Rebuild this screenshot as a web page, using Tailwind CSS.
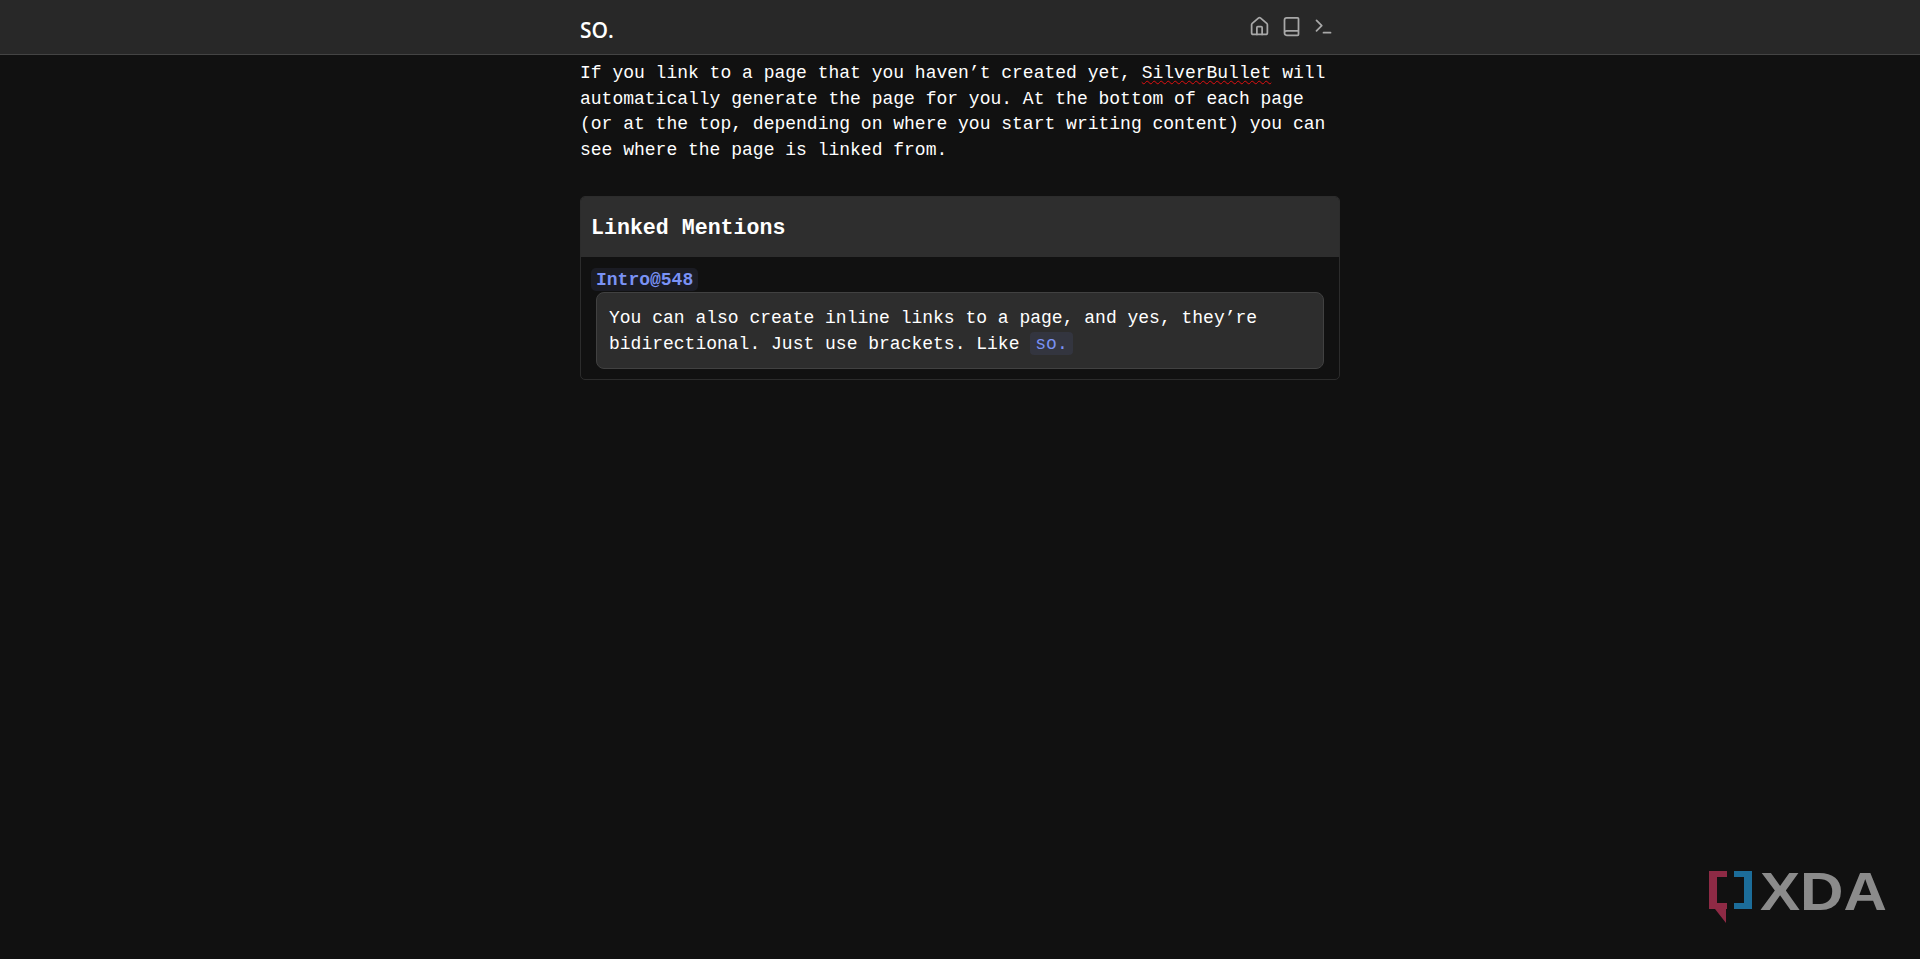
<!doctype html>
<html lang="en">
<head>
<meta charset="utf-8">
<title>so.</title>
<script src="https://cdn.jsdelivr.net/npm/@tailwindcss/browser@4"></script>
</head>
<body class="relative h-[959px] overflow-hidden bg-[#111111] text-white font-['Liberation_Mono',monospace] text-[18px] leading-[25.6px]">
<header class="h-[55px] border-b border-[#444444] bg-[#282828]">
  <div class="mx-auto flex h-full w-[760px] items-start justify-between">
    <h1 class="mt-[17px] font-['Open_Sans',sans-serif] text-[21px] leading-[27px] font-semibold">SO.</h1>
    <nav class="mt-[16px] mr-[6px] flex items-center gap-[11px] text-[#a8a8a8]">
      <svg class="h-[21px] w-[21px]" viewBox="0 0 24 24" fill="none" stroke="currentColor" stroke-width="2" stroke-linecap="round" stroke-linejoin="round"><path d="M15 21v-8a1 1 0 0 0-1-1h-4a1 1 0 0 0-1 1v8"/><path d="M3 10a2 2 0 0 1 .709-1.528l7-5.999a2 2 0 0 1 2.582 0l7 5.999A2 2 0 0 1 21 10v9a2 2 0 0 1-2 2H5a2 2 0 0 1-2-2z"/></svg>
      <svg class="h-[21px] w-[21px]" viewBox="0 0 24 24" fill="none" stroke="currentColor" stroke-width="2" stroke-linecap="round" stroke-linejoin="round"><path d="M4 19.5v-15A2.5 2.5 0 0 1 6.5 2H19a1 1 0 0 1 1 1v18a1 1 0 0 1-1 1H6.5a1 1 0 0 1 0-5H20"/></svg>
      <svg class="h-[21px] w-[21px]" viewBox="0 0 24 24" fill="none" stroke="currentColor" stroke-width="2" stroke-linecap="round" stroke-linejoin="round"><polyline points="4 17 10 11 4 5"/><line x1="12" y1="19" x2="20" y2="19"/></svg>
    </nav>
  </div>
</header>
<main class="mx-auto w-[760px]">
  <p class="mt-[6px] whitespace-pre-line">If you link to a page that you haven’t created yet, <span class="underline decoration-wavy decoration-[#e01010] decoration-1 underline-offset-2">SilverBullet</span> will
automatically generate the page for you. At the bottom of each page
(or at the top, depending on where you start writing content) you can
see where the page is linked from.</p>
  <section class="mt-[32.6px] h-[184px] rounded-[5px] border border-[#2c2c2c]">
    <h2 class="flex h-[60px] items-center rounded-t-[4px] bg-[#2e2e2e] pt-[4px] pl-[10px] text-[21.6px] font-bold">Linked Mentions</h2>
    <div class="pt-[11px]">
      <a class="ml-[10px] block h-[23px] w-fit rounded-[5px] bg-[#1b1c24] px-[5px] leading-[25px] font-bold text-[#7a92f5]">Intro@548</a>
      <div class="mt-[1px] mr-[15px] ml-[15px] h-[77px] rounded-[8px] border border-[#414141] bg-[#2d2d2d] pt-[13px] pl-[12px] whitespace-pre-line">You can also create inline links to a page, and yes, they’re
bidirectional. Just use brackets. Like <span class="rounded-[4px] bg-[#33353f] px-[5px] py-[1.5px] text-[#7a92f5]">so.</span></div>
    </div>
  </section>
</main>
<svg class="absolute top-[865px] left-[1705px] h-[62px] w-[190px]" viewBox="0 0 190 62" aria-label="XDA">
  <path d="M4 6H22V12H12V38H22V44H21V58L10 44H4Z" fill="#8e2a45"/>
  <path d="M29 6H47V44H29V38H39V12H29Z" fill="#1c6d9a"/>
  <text x="55" y="45" textLength="127" lengthAdjust="spacingAndGlyphs" font-family="Liberation Sans, sans-serif" font-weight="700" font-size="54" fill="#8b8b8b">XDA</text>
</svg>
</body>
</html>
